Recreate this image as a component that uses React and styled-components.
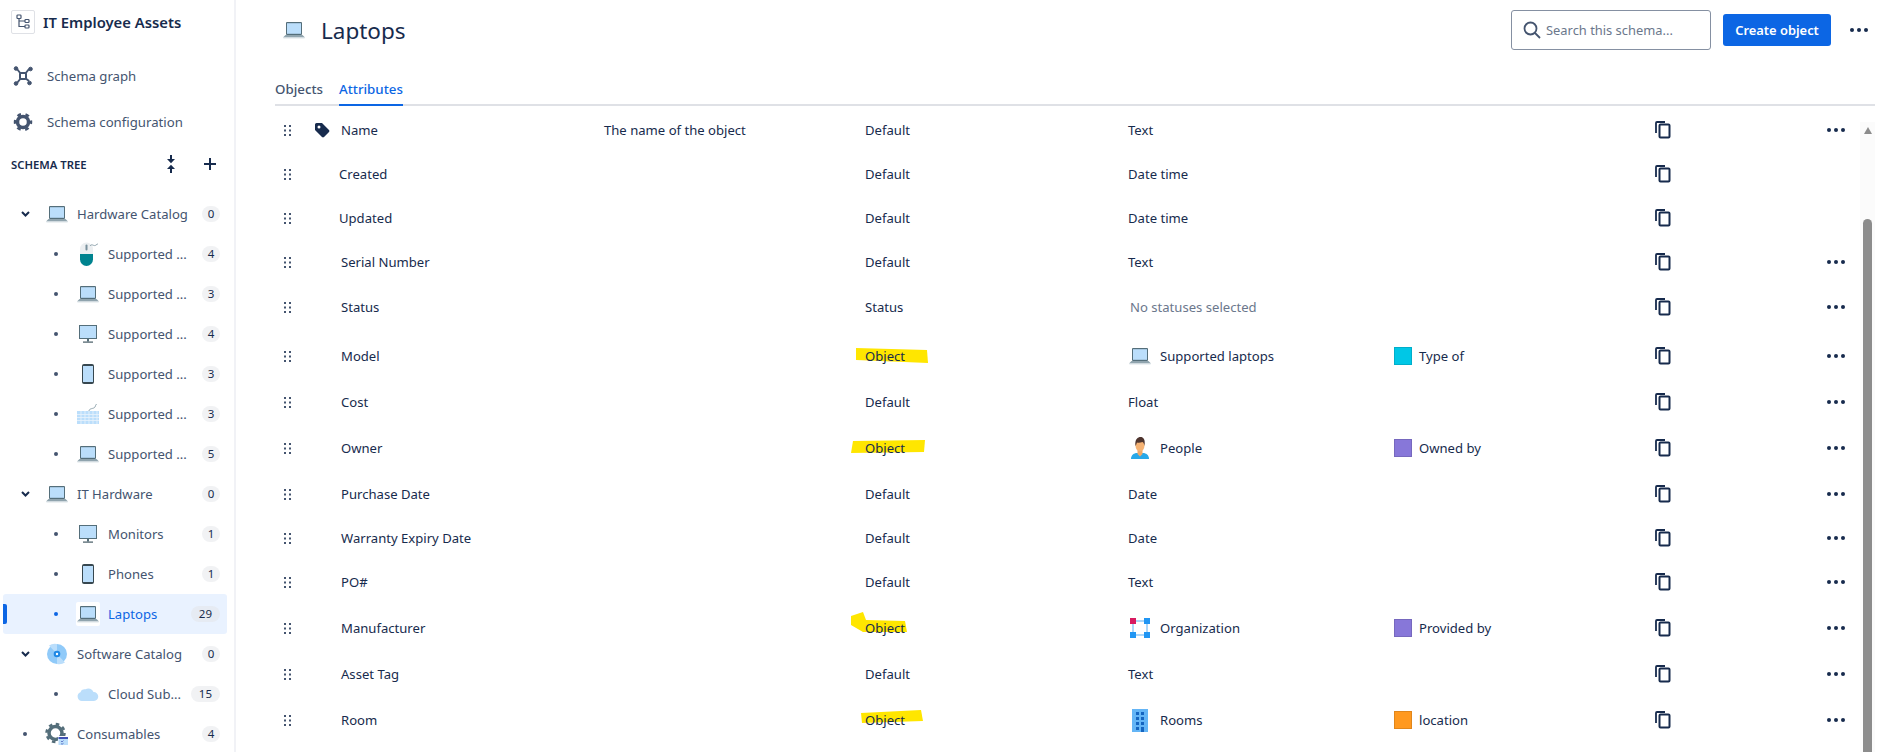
import React from "react";
import styled, { createGlobalStyle } from "styled-components";

const Global = createGlobalStyle`
  html, body { margin: 0; padding: 0; background: #fff; }
  body { font-family: "Noto Sans", "Open Sans", sans-serif; color: #172B4D; }
`;

const Page = styled.div`
  display: flex; width: 1898px; height: 752px; overflow: hidden; background: #fff;
`;
const Sidebar = styled.aside`
  width: 234px; height: 752px; flex: none; border-right: 2px solid #F1F2F6; overflow: hidden;
  display: flex; flex-direction: column;
`;
const SchemaHead = styled.div`
  display: flex; flex: none; align-items: center; gap: 8px; height: 24px; margin: 10px 0 19px 11px;
`;
const SchemaBadge = styled.div`
  width: 22px; height: 22px; border: 1px solid #DFE1E6; border-radius: 2px;
  display: flex; align-items: center; justify-content: center; background: #fff;
`;
const SchemaTitle = styled.div`
  font-size: 14.8px; font-weight: 600; color: #172B4D; white-space: nowrap;
`;
const NavItem = styled.div`
  display: flex; flex: none; align-items: center; height: 46px; padding-left: 13px; gap: 14px;
  font-size: 13.2px; color: #44546F;
`;
const TreeHead = styled.div`
  display: flex; flex: none; align-items: center; height: 20px; margin-top: 9px; padding-left: 11px;
  font-size: 11.3px; font-weight: 600; color: #172B4D;
`;
const TreeHeadLabel = styled.span` width: 155px; `;
const TreeHeadAdd = styled.span` margin-left: 28px; display: flex; `;
const Tree = styled.div`
  display: flex; flex: none; flex-direction: column; margin-top: 20px;
`;
const TreeRow = styled.div`
  position: relative; display: flex; align-items: center; height: 40px;
  margin: 0 7px 0 3px; padding-left: ${p => (p.$child ? 48 : 17)}px; border-radius: 3px;
  background: ${p => (p.$active ? "#E9F2FF" : "transparent")};
  color: ${p => (p.$active ? "#0C66E4" : "#44546F")};
`;
const Indicator = styled.span`
  position: absolute; left: 0; top: 10px; width: 4px; height: 20px; background: #0C66E4;
  border-radius: 0 2px 2px 0;
`;
const Lead = styled.span`
  width: 10px; height: 12px; flex: none; display: flex; align-items: center; justify-content: center;
`;
const Bullet = styled.span`
  width: 4px; height: 4px; border-radius: 50%; background: currentColor;
`;
const TreeIcon = styled.span`
  width: 24px; height: 24px; margin-left: 15px; flex: none; display: flex;
  align-items: center; justify-content: center; border-radius: 2px;
  background: ${p => (p.$active ? "#fff" : "transparent")};
`;
const TreeLabel = styled.span`
  margin-left: 8px; font-size: 13.1px; white-space: nowrap; flex: 1; overflow: hidden;
`;
const Count = styled.span`
  margin-right: 7px; min-width: 18px; padding: 0 ${p => (p.$wide ? 8 : 0)}px; box-sizing: border-box; height: 16px; border-radius: 8px;
  background: ${p => (p.$active ? "#E6EBF3" : "#F1F2F4")}; color: #172B4D;
  font-size: 11.5px; line-height: 16px; text-align: center;
`;

const Main = styled.main`
  flex: 1; display: flex; flex-direction: column; padding: 0 23px 0 39px; min-width: 0;
`;
const Header = styled.header`
  display: flex; align-items: center; height: 60px; flex: none;
`;
const HeaderIcon = styled.span`
  display: flex; margin-left: 7px; width: 24px; justify-content: center;
`;
const Title = styled.h1`
  margin: 0 0 0 15px; font-size: 22.5px; font-weight: 400; color: #172B4D; flex: 1;
`;
const Search = styled.div`
  display: flex; align-items: center; gap: 5px; padding-left: 11px;
  box-sizing: border-box; width: 200px; height: 40px; border: 1px solid #8590A2; border-radius: 3px;
  color: #6B778C; font-size: 12.9px; white-space: nowrap;
`;
const Create = styled.button`
  margin-left: 12px; width: 108px; height: 32px; border: 0; border-radius: 3px; background: #0C66E4;
  color: #fff; font: 600 12.9px "Noto Sans", sans-serif; padding: 0;
`;
const HeadMore = styled.span`
  display: flex; margin-left: 19px; margin-right: 7px;
`;
const Tabs = styled.nav`
  display: flex; gap: 16px; height: 46px; box-sizing: border-box; flex: none;
  border-bottom: 2px solid #DFE1E6; align-items: flex-end;
`;
const Tab = styled.div`
  font-size: 13.3px; font-weight: 500; height: 29px; margin-bottom: -2px; line-height: 29px;
  color: ${p => (p.$active ? "#0C66E4" : "#44546F")};
  border-bottom: 2px solid ${p => (p.$active ? "#0C66E4" : "transparent")};
`;
const TableWrap = styled.div`
  flex: 1; display: flex; min-height: 0; padding-top: 2px;
`;
const Table = styled.div` flex: 1; min-width: 0; `;
const Row = styled.div`
  display: grid; height: ${p => p.$h}px; align-items: center;
  grid-template-columns: 46px 283px 261px 263px 266px 261px 172px 34px;
  font-size: 13.1px; color: #172B4D;
`;
const Drag = styled.span` display: flex; padding-left: 9px; `;
const NameCell = styled.span`
  display: flex; align-items: center; padding-left: ${p => (p.$inset ? 20 : 18)}px; position: relative;
`;
const TagMark = styled.span`
  position: absolute; left: -7px; top: 1px; display: flex;
`;
const TypeCell = styled.span` position: relative; `;
const TypeText = styled.span` position: relative; `;
const Mark = styled.svg`
  position: absolute; overflow: visible; pointer-events: none; left: 0; top: 0;
`;
const TargetCell = styled.span`
  display: flex; align-items: center; gap: 8px;
  color: ${p => (p.$muted ? "#6B778C" : "#172B4D")};
  padding-left: ${p => (p.$muted ? 2 : 0)}px;
`;
const TargetIcon = styled.span`
  display: flex; width: 24px; height: 24px; align-items: center; justify-content: center;
`;
const RelCell = styled.span` display: flex; align-items: center; gap: 7px; `;
const Swatch = styled.span`
  width: 16px; height: 16px; border: 1px solid rgba(0,0,0,0.12); background: ${p => p.$c};
`;
const Copy = styled.span` display: flex; `;
const More = styled.span` display: flex; `;
const Scroll = styled.div`
  width: 15px; flex: none; background: #FBFBFB; margin-top: 14px; margin-bottom: -20px;
  display: flex; flex-direction: column; align-items: center;
`;
const ScrollUp = styled.span`
  margin-top: 5px; width: 0; height: 0; border: 4.5px solid transparent; border-top: 0;
  border-bottom: 7px solid #8C8C8C;
`;
const Thumb = styled.span`
  margin-top: 85px; width: 9px; flex: 1; background: #8C8C8C; border-radius: 5px 5px 0 0;
`;

const Laptop = ({ s = 24 }) => (
  <svg width={s} height={s} viewBox="0 0 24 24">
    <rect x="4" y="4" width="16" height="13" rx="1" fill="#546E7A" />
    <rect x="5" y="5.2" width="14" height="10.6" fill="#BBDEFB" />
    <path d="M3.5 17h17l2.5 2.500H1z" fill="#90A4AE" />
    <path d="M1 19.5h22l-.5 1h-21z" fill="#DCE4E8" />
  </svg>
);
const MouseIcon = () => (
  <svg width="24" height="24" viewBox="0 0 24 24">
    <path d="M4 12h13v5.500a6.500 6.500 0 0 1-13 0z" fill="#00838F" />
    <path d="M4 12V7a6.500 6.500 0 0 1 13 0v5z" fill="#ECEFF1" />
    <rect x="9.500" y="2.500" width="2" height="6" rx="1" fill="#78909C" />
    <path d="M14 4c2-3 4 1 6-1 1-.8 1.500-1 2-1" fill="none" stroke="#78909C" strokeWidth=".8" />
  </svg>
);
const Monitor = () => (
  <svg width="24" height="24" viewBox="0 0 24 24">
    <rect x="3" y="3" width="18" height="14" fill="#546E7A" />
    <rect x="4" y="4" width="16" height="12" fill="#BBDEFB" />
    <rect x="11" y="17" width="2" height="2.500" fill="#546E7A" />
    <rect x="7" y="19.500" width="10" height="1.200" fill="#455A64" />
  </svg>
);
const Phone = () => (
  <svg width="24" height="24" viewBox="0 0 24 24">
    <rect x="6" y="2" width="12" height="20" rx="2" fill="#37474F" />
    <rect x="7" y="4" width="10" height="16" fill="#BBDEFB" />
  </svg>
);
const Keyboard = () => (
  <svg width="24" height="24" viewBox="0 0 24 24">
    <rect x="1" y="9" width="22" height="13" fill="#BBDEFB" />
    <path d="M1 12.500h22M1 15.500h22M1 18.500h22M5 9v13M9 9v13M13 9v13M17 9v13M21 9v13" stroke="#EAF4FC" strokeWidth=".8" />
    <path d="M13 9c0-3 5-2 6-4 .4-1 .6-2 1.500-3" fill="none" stroke="#78909C" strokeWidth=".8" />
  </svg>
);
const Disc = () => (
  <svg width="24" height="24" viewBox="0 0 24 24">
    <circle cx="12" cy="12" r="10" fill="#90CAF9" />
    <path d="M12 12L4 3.500A10 10 0 0 1 12 2zM12 12l8 8.500A10 10 0 0 1 12 22z" fill="#BBDEFB" />
    <circle cx="12" cy="12" r="3.300" fill="#1E88E5" />
    <circle cx="12" cy="12" r="1.200" fill="#fff" />
  </svg>
);
const Cloud = () => (
  <svg width="24" height="24" viewBox="0 0 24 24">
    <path d="M6 19a4.500 4.500 0 0 1-1.500-8.700 4 4 0 0 1 5-3 5.500 5.500 0 0 1 8 2.700 4.500 4.500 0 0 1 .5 9z" fill="#BBDEFB" />
  </svg>
);
const GearBox = () => (
  <svg width="24" height="24" viewBox="0 0 24 24">
    <circle cx="10.500" cy="11" r="6.500" fill="none" stroke="#546E7A" strokeWidth="3.500" />
    <circle cx="10.500" cy="11" r="9" fill="none" stroke="#546E7A" strokeWidth="2.500" strokeDasharray="3.500 3.570" />
    <rect x="13" y="14" width="10" height="9" fill="#fff" />
    <rect x="13.500" y="15" width="9.500" height="8" fill="#BBDEFB" />
    <rect x="13.500" y="15" width="9.500" height="2" fill="#3F51B5" />
    <path d="M16 19l1 1 1.500-1.500M16 21.500l1 .8 1.500-1" fill="none" stroke="#3F51B5" strokeWidth=".7" />
  </svg>
);
const Person = () => (
  <svg width="24" height="24" viewBox="0 0 24 24">
    <path d="M3 23c0-4 3-6 6-6h6c3 0 6 2 6 6z" fill="#29A8E8" />
    <path d="M9.500 14h5v4l-2.500 2.500L9.500 18z" fill="#F0A868" />
    <ellipse cx="12" cy="9.500" rx="4.500" ry="6" fill="#F5B273" />
    <path d="M7.500 10C6.500 3 10 1 12.500 1c3 0 5 2.500 4 9-.3-2-1-3.500-2-4-2 .8-4.500.8-5.500.5-.5 1-.5 2-1.500 3.500z" fill="#4E342E" />
  </svg>
);
const Org = () => (
  <svg width="24" height="24" viewBox="0 0 24 24">
    <path d="M7 5h10M7 19h10M5 7v10M19 7v10" stroke="#90CAF9" strokeWidth="1.500" />
    <rect x="2" y="2" width="6" height="6" fill="#D81B60" />
    <rect x="16" y="2" width="6" height="6" fill="#2196F3" />
    <rect x="2" y="16" width="6" height="6" fill="#2196F3" />
    <rect x="16" y="16" width="6" height="6" fill="#2196F3" />
  </svg>
);
const Building = () => (
  <svg width="24" height="24" viewBox="0 0 24 24">
    <rect x="4" y="1" width="16" height="23" fill="#64B5F6" />
    <path d="M8 4h3v3H8zM13 4h3v3h-3zM8 9h3v3H8zM13 9h3v3h-3zM8 14h3v3H8zM13 14h3v3h-3zM8 19h3v3H8zM13 19h3v5h-3z" fill="#1565C0" />
  </svg>
);

const Dots = ({ c = "#172B4D" }) => (
  <svg width="18" height="6" viewBox="0 0 18 6">
    <circle cx="2" cy="3" r="2" fill={c} /><circle cx="9" cy="3" r="2" fill={c} /><circle cx="16" cy="3" r="2" fill={c} />
  </svg>
);
const Grip = () => (
  <svg width="7" height="11" viewBox="0 0 7 11" fill="#44546F">
    <rect width="2" height="2" /><rect x="5" width="2" height="2" />
    <rect y="4.500" width="2" height="2" /><rect x="5" y="4.500" width="2" height="2" />
    <rect y="9" width="2" height="2" /><rect x="5" y="9" width="2" height="2" />
  </svg>
);
const CopyIcon = () => (
  <svg width="16" height="18" viewBox="0 0 16 18" fill="none" stroke="#172B4D">
    <rect x="4.500" y="3.500" width="10" height="13" rx="1" strokeWidth="2" />
    <path d="M1 12V2a1 1 0 0 1 1-1h8" strokeWidth="1.800" />
  </svg>
);
const Tag = () => (
  <svg width="16" height="16" viewBox="0 0 16 16">
    <path d="M1 2.500A1.500 1.500 0 0 1 2.500 1H8l7 7a1.500 1.500 0 0 1 0 2L10 15a1.500 1.500 0 0 1-2 0L1 8z" fill="#172B4D" />
    <circle cx="5" cy="5" r="1.500" fill="#fff" />
  </svg>
);
const SchemaIcon = () => (
  <svg width="14" height="16" viewBox="0 0 14 16" fill="none" stroke="#44546F" strokeWidth="1.200">
    <rect x="1" y="1" width="4" height="3.500" rx=".8" />
    <rect x="9" y="5.500" width="4" height="3" rx=".8" />
    <rect x="9" y="11" width="4" height="3" rx=".8" />
    <path d="M3 4.500V12.500H9M3 7H9" />
  </svg>
);
const GraphIcon = () => (
  <svg width="20" height="20" viewBox="0 0 20 20" fill="#44546F" stroke="#44546F">
    <path d="M4 3l4 5M16 3l-4 5M4 17l4-5M16 15l-4-3" strokeWidth="2" />
    <rect x="7" y="7" width="6" height="6" rx="1" fill="none" strokeWidth="2" />
    <circle cx="3" cy="2.500" r="1.800" /><circle cx="17.500" cy="3" r="1.800" />
    <circle cx="3" cy="17.500" r="1.800" /><circle cx="16.500" cy="17" r="1.800" />
  </svg>
);
const GearIcon = () => (
  <svg width="20" height="20" viewBox="0 0 20 20" fill="none" stroke="#44546F">
    <circle cx="10" cy="10" r="5.500" strokeWidth="3.500" />
    <circle cx="10" cy="10" r="8" strokeWidth="2.500" strokeDasharray="3.800 4.578" strokeDashoffset="1.900" />
  </svg>
);
const Collapse = () => (
  <svg width="10" height="18" viewBox="0 0 10 18" fill="#172B4D">
    <path d="M4 0h2v4h3L5 8.300 1 4h3zM5 9.700L9 14H6v4H4v-4H1z" />
  </svg>
);
const Plus = () => (
  <svg width="12" height="12" viewBox="0 0 12 12" fill="#172B4D">
    <rect x="5" width="2" height="12" /><rect y="5" width="12" height="2" />
  </svg>
);
const Chevron = () => (
  <svg width="9" height="6" viewBox="0 0 9 6" fill="none" stroke="#172B4D" strokeWidth="2">
    <path d="M1 1l3.500 3.500L8 1" />
  </svg>
);
const SearchGlass = () => (
  <svg width="18" height="18" viewBox="0 0 18 18" fill="none" stroke="#44546F" strokeWidth="1.800">
    <circle cx="7.500" cy="7.500" r="6" /><path d="M12 12l5 5" />
  </svg>
);

const marks = {
  Model: { w: 72, h: 18, x: -9, y: -9, d: "M0 1L71 3L72 16L0 13Z" },
  Owner: { w: 74, h: 14, x: -14, y: -8, d: "M2 1L74 0L73 12L0 13Z" },
  Manufacturer: { w: 56, h: 20, x: -14, y: -16, d: "M0 4L12 0L15 8L54 9L56 20L12 20L0 13Z" },
  Room: { w: 62, h: 14, x: -4, y: -10, d: "M0 3L60 0L62 11L1 13Z" },
};

const rows = [
  { n: "Name", h: 44, d: "The name of the object", t: "Default", v: "Text", tag: true, inset: true, more: true },
  { n: "Created", h: 44, t: "Default", v: "Date time" },
  { n: "Updated", h: 44, t: "Default", v: "Date time" },
  { n: "Serial Number", h: 44, t: "Default", v: "Text", inset: true, more: true },
  { n: "Status", h: 46, t: "Status", v: "No statuses selected", muted: true, inset: true, more: true },
  { n: "Model", h: 52, t: "Object", v: "Supported laptops", icon: <Laptop s={24} />, rel: "Type of", c: "#00C7E6", inset: true, more: true },
  { n: "Cost", h: 40, t: "Default", v: "Float", inset: true, more: true },
  { n: "Owner", h: 52, t: "Object", v: "People", icon: <Person />, rel: "Owned by", c: "#8777D9", inset: true, more: true },
  { n: "Purchase Date", h: 40, t: "Default", v: "Date", inset: true, more: true },
  { n: "Warranty Expiry Date", h: 48, t: "Default", v: "Date", inset: true, more: true },
  { n: "PO#", h: 40, t: "Default", v: "Text", inset: true, more: true },
  { n: "Manufacturer", h: 52, t: "Object", v: "Organization", icon: <Org />, rel: "Provided by", c: "#8777D9", inset: true, more: true },
  { n: "Asset Tag", h: 40, t: "Default", v: "Text", inset: true, more: true },
  { n: "Room", h: 52, t: "Object", v: "Rooms", icon: <Building />, rel: "location", c: "#FF991F", inset: true, more: true },
];

const tree = [
  { l: "Hardware Catalog", c: 0, i: <Laptop /> , parent: true },
  { l: "Supported ...", c: 4, i: <MouseIcon />, child: true },
  { l: "Supported ...", c: 3, i: <Laptop />, child: true },
  { l: "Supported ...", c: 4, i: <Monitor />, child: true },
  { l: "Supported ...", c: 3, i: <Phone />, child: true },
  { l: "Supported ...", c: 3, i: <Keyboard />, child: true },
  { l: "Supported ...", c: 5, i: <Laptop />, child: true },
  { l: "IT Hardware", c: 0, i: <Laptop />, parent: true },
  { l: "Monitors", c: 1, i: <Monitor />, child: true },
  { l: "Phones", c: 1, i: <Phone />, child: true },
  { l: "Laptops", c: 29, i: <Laptop />, child: true, active: true },
  { l: "Software Catalog", c: 0, i: <Disc />, parent: true },
  { l: "Cloud Sub...", c: 15, i: <Cloud />, child: true },
  { l: "Consumables", c: 4, i: <GearBox /> },
];

export default function App() {
  return (
    <Page>
      <Global />
      <Sidebar>
        <SchemaHead>
          <SchemaBadge><SchemaIcon /></SchemaBadge>
          <SchemaTitle>IT Employee Assets</SchemaTitle>
        </SchemaHead>
        <NavItem><GraphIcon />Schema graph</NavItem>
        <NavItem><GearIcon />Schema configuration</NavItem>
        <TreeHead>
          <TreeHeadLabel>SCHEMA TREE</TreeHeadLabel>
          <Collapse />
          <TreeHeadAdd><Plus /></TreeHeadAdd>
        </TreeHead>
        <Tree>
          {tree.map((t, i) => (
            <TreeRow key={i} $child={t.child} $active={t.active}>
              {t.active && <Indicator />}
              <Lead>{t.parent ? <Chevron /> : <Bullet />}</Lead>
              <TreeIcon $active={t.active}>{t.i}</TreeIcon>
              <TreeLabel>{t.l}</TreeLabel>
              <Count $active={t.active} $wide={t.c > 9}>{t.c}</Count>
            </TreeRow>
          ))}
        </Tree>
      </Sidebar>
      <Main>
        <Header>
          <HeaderIcon><Laptop /></HeaderIcon>
          <Title>Laptops</Title>
          <Search><SearchGlass />Search this schema...</Search>
          <Create>Create object</Create>
          <HeadMore><Dots /></HeadMore>
        </Header>
        <Tabs>
          <Tab>Objects</Tab>
          <Tab $active>Attributes</Tab>
        </Tabs>
        <TableWrap>
          <Table>
            {rows.map(r => {
              const m = r.t === "Object" ? marks[r.n] : null;
              return (
                <Row key={r.n} $h={r.h}>
                  <Drag><Grip /></Drag>
                  <NameCell $inset={r.inset}>
                    {r.tag && <TagMark><Tag /></TagMark>}
                    {r.n}
                  </NameCell>
                  <span>{r.d}</span>
                  <TypeCell>
                    {m && (
                      <Mark width={m.w} height={m.h} style={{ left: m.x, top: 9 + m.y }}>
                        <path d={m.d} fill="#FFE600" />
                      </Mark>
                    )}
                    <TypeText>{r.t}</TypeText>
                  </TypeCell>
                  <TargetCell $muted={r.muted}>
                    {r.icon && <TargetIcon>{r.icon}</TargetIcon>}
                    {r.v}
                  </TargetCell>
                  <RelCell>
                    {r.rel && <Swatch $c={r.c} />}
                    {r.rel}
                  </RelCell>
                  <Copy><CopyIcon /></Copy>
                  <More>{r.more && <Dots />}</More>
                </Row>
              );
            })}
          </Table>
          <Scroll>
            <ScrollUp />
            <Thumb />
          </Scroll>
        </TableWrap>
      </Main>
    </Page>
  );
}
